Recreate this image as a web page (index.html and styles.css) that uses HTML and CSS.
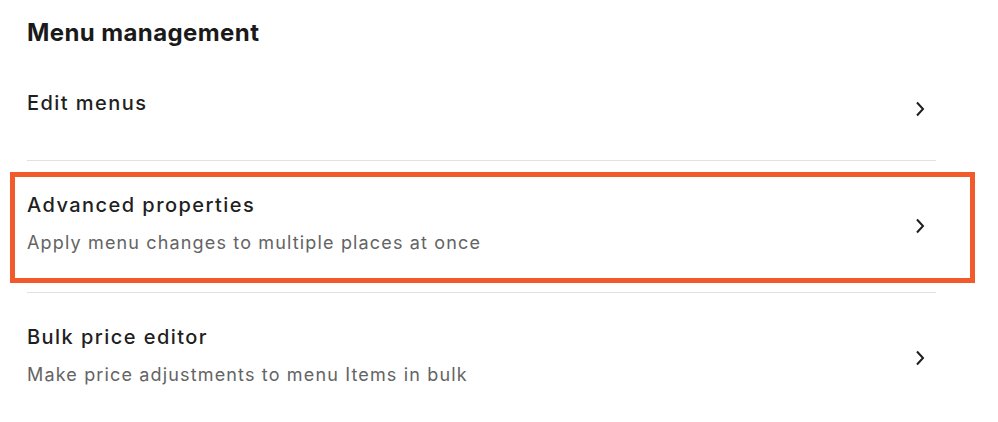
FILE: index.html
```html
<!DOCTYPE html>
<html lang="en">
<head>
<meta charset="utf-8">
<title>Menu management</title>
<link rel="stylesheet" href="styles.css">
</head>
<body>
<main class="page">
  <h2 class="section-title">Menu management</h2>
  <ul class="nav-list">
    <li class="nav-row nav-row--single">
      <div class="nav-text">
        <div class="nav-title">Edit menus</div>
      </div>
      <svg class="chevron" viewBox="0 0 24 24" aria-hidden="true"><path d="M9 5.5L15 12L9 18.5"/></svg>
    </li>
    <li class="nav-row nav-row--highlight">
      <div class="nav-text">
        <div class="nav-title">Advanced properties</div>
        <div class="nav-sub">Apply menu changes to multiple places at once</div>
      </div>
      <svg class="chevron" viewBox="0 0 24 24" aria-hidden="true"><path d="M9 5.5L15 12L9 18.5"/></svg>
    </li>
    <li class="nav-row">
      <div class="nav-text">
        <div class="nav-title">Bulk price editor</div>
        <div class="nav-sub">Make price adjustments to menu Items in bulk</div>
      </div>
      <svg class="chevron" viewBox="0 0 24 24" aria-hidden="true"><path d="M9 5.5L15 12L9 18.5"/></svg>
    </li>
  </ul>
</main>
</body>
</html>
```

FILE: styles.css
```css
* { box-sizing: border-box; }

html, body {
  margin: 0;
  padding: 0;
  background: #ffffff;
}

body {
  font-family: Inter, "Noto Sans", "Liberation Sans", sans-serif;
  color: #1f1f1f;
  overflow: hidden;
}

.page {
  padding: 17px 62px 0 27px;
}

.section-title {
  margin: 0 0 10px;
  font-size: 24px;
  line-height: 32px;
  font-weight: 700;
  letter-spacing: 0.4px;
  color: #1a1a1a;
}

.nav-list {
  list-style: none;
  margin: 0;
  padding: 0;
}

.nav-row {
  position: relative;
  display: flex;
  align-items: center;
  justify-content: space-between;
  padding: 30px 4px 31px 0;
  border-bottom: 1px solid #e1e1e1;
}

.nav-text {
  padding-bottom: 6px;
}

.nav-row--single .nav-text {
  padding-bottom: 12px;
}

.nav-title {
  font-size: 20px;
  line-height: 28px;
  font-weight: 500;
  letter-spacing: 1.45px;
  color: #1f1f1f;
}

.nav-sub {
  margin-top: 12px;
  font-size: 18px;
  line-height: 24px;
  font-weight: 400;
  letter-spacing: 1.15px;
  color: #646464;
}

.chevron {
  width: 24px;
  height: 24px;
  flex: none;
  fill: none;
  stroke: #1f1f1f;
  stroke-width: 2;
}

.nav-row--highlight::after {
  content: "";
  position: absolute;
  top: 11px;
  bottom: 9px;
  left: -17px;
  right: -39px;
  border: 5px solid #f15a2b;
  pointer-events: none;
}
```
